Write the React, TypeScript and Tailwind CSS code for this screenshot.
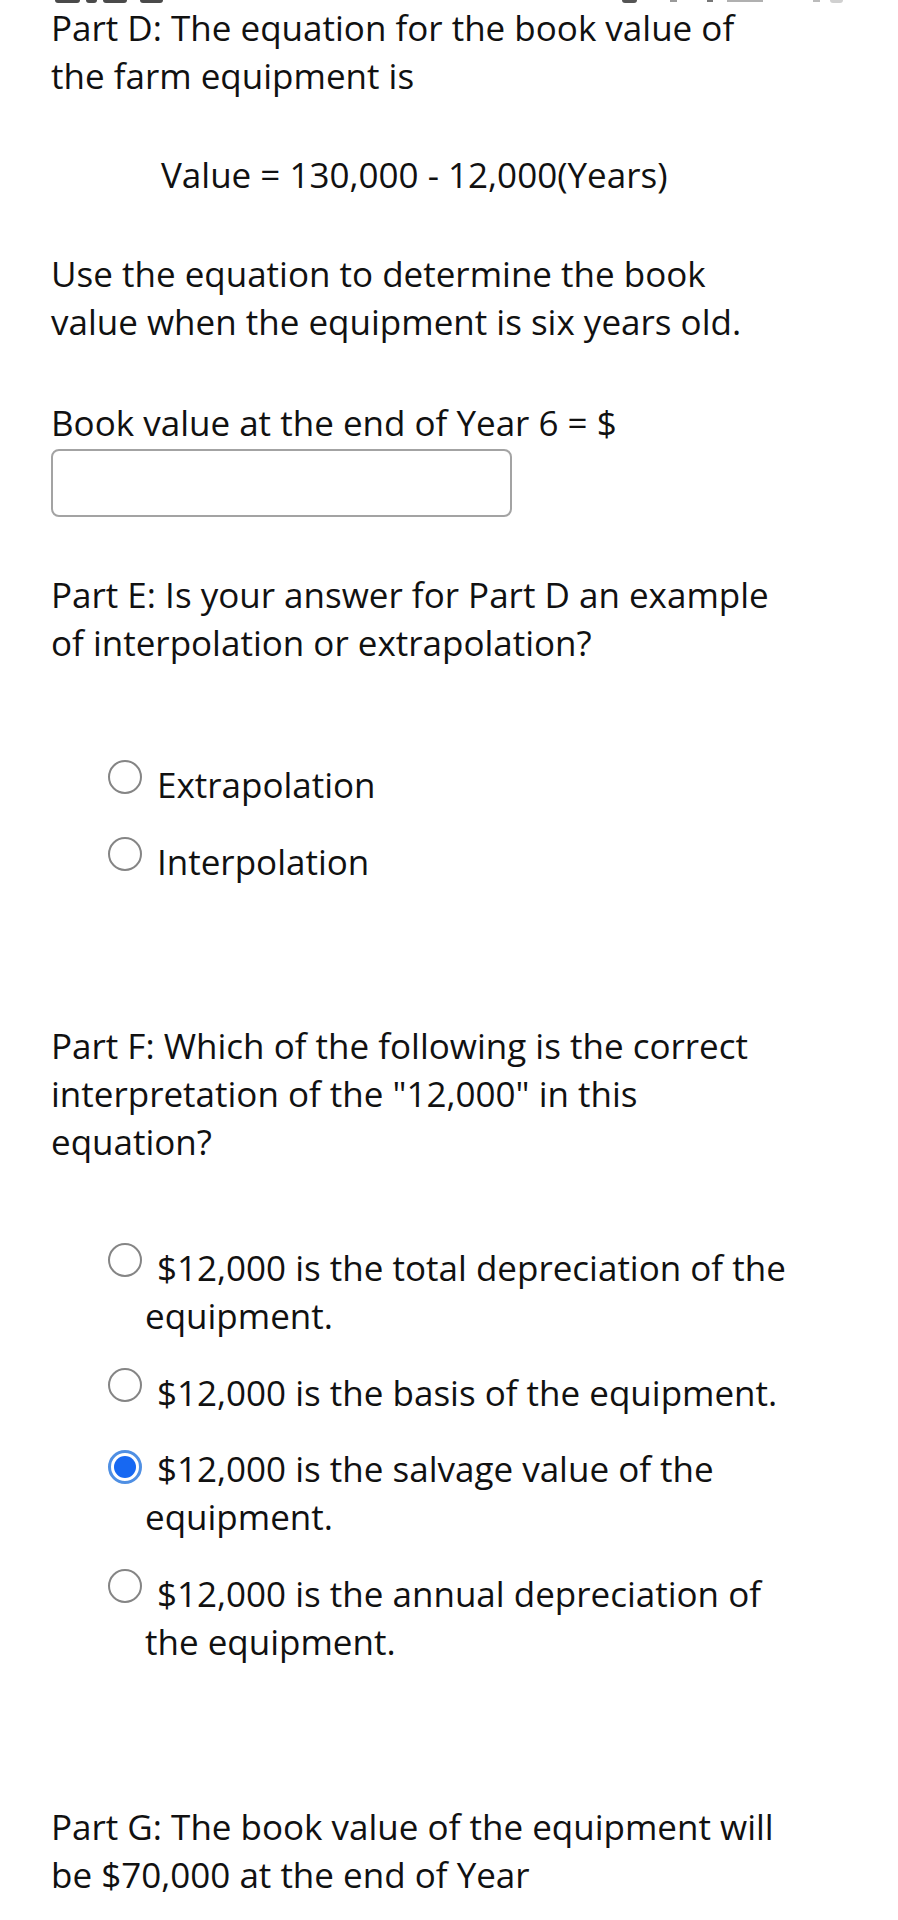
import React from 'react';

type Choice = { label: string; checked?: boolean };

const PART_E: Choice[] = [{ label: 'Extrapolation' }, { label: 'Interpolation' }];

const PART_F: Choice[] = [
  { label: '$12,000 is the total depreciation of the equipment.' },
  { label: '$12,000 is the basis of the equipment.' },
  { label: '$12,000 is the salvage value of the equipment.', checked: true },
  { label: '$12,000 is the annual depreciation of the equipment.' },
];

function Radio({ checked }: { checked?: boolean }) {
  if (checked) {
    return (
      <span className="inline-flex items-center justify-center w-[34px] h-[34px] rounded-full border-[3px] border-[#4f8fe3] bg-white mr-[15px] align-[4px] indent-0">
        <span className="block w-[22px] h-[22px] rounded-full bg-[#1768f2]" />
      </span>
    );
  }
  return (
    <span className="inline-block w-[34px] h-[34px] rounded-full border-2 border-[#858585] bg-white mr-[15px] align-[4px]" />
  );
}

function Option({ choice }: { choice: Choice }) {
  return (
    <div className="pl-[94px] -indent-[37px]">
      <label className="block">
        <Radio checked={choice.checked} />
        {choice.label}
      </label>
    </div>
  );
}

export default function App() {
  return (
    <div
      className="min-h-screen w-[898px] bg-white text-[#111111] text-[35px] leading-[48px]"
      style={{ fontFamily: '"Open Sans", "Noto Sans", sans-serif' }}
    >
      {/* cut-off bits of the line above */}
      <div className="flex h-[4px] items-start">
        <span className="ml-[55px] w-[25px] h-[3px] rounded-b bg-[#4a4a4a]" />
        <span className="ml-[6px] w-[11px] h-[3px] rounded-b bg-[#4a4a4a]" />
        <span className="ml-[6px] w-[24px] h-[3px] rounded-b bg-[#4a4a4a]" />
        <span className="ml-[13px] w-[23px] h-[3px] rounded-b bg-[#4a4a4a]" />
        <span className="ml-[459px] w-[15px] h-[3px] rounded-b bg-[#555555]" />
        <span className="ml-[33px] w-[7px] h-[2px] bg-[#9a9a9a]" />
        <span className="ml-[30px] w-[6px] h-[2px] bg-[#777777]" />
        <span className="ml-[14px] w-[36px] h-[2px] bg-[#b0b0b0]" />
        <span className="ml-[50px] w-[7px] h-[2px] bg-[#bbbbbb]" />
        <span className="ml-[10px] w-[13px] h-[3px] rounded-b bg-[#d0d0d0]" />
      </div>

      <div className="pl-[51px] pr-[106px]">
        <p>Part D: The equation for the book value of the farm equipment is</p>

        <p className="mt-[51px] pl-[110px]">Value = 130,000 - 12,000(Years)</p>

        <p className="mt-[51px]">Use the equation to determine the book value when the equipment is six years old.</p>

        <p className="mt-[53px]">Book value at the end of Year 6 = $</p>
        <input
          type="text"
          aria-label="Book value at the end of Year 6"
          className="block mt-[2px] w-[461px] h-[68px] rounded-[8px] border-2 border-[#a3a3a3] bg-white px-3 outline-none"
        />

        <p className="mt-[54px]">Part E: Is your answer for Part D an example of interpolation or extrapolation?</p>

        <div className="mt-[93px] flex flex-col gap-[28px]">
          {PART_E.map((c) => (
            <Option key={c.label} choice={c} />
          ))}
        </div>

        <p className="mt-[136px]">
          Part F: Which of the following is the correct interpretation of the "12,000" in this equation?
        </p>

        <div className="mt-[77px] flex flex-col gap-[28px]">
          {PART_F.map((c) => (
            <Option key={c.label} choice={c} />
          ))}
        </div>

        <p className="mt-[137px]">Part G: The book value of the equipment will be $70,000 at the end of Year</p>
      </div>
    </div>
  );
}
